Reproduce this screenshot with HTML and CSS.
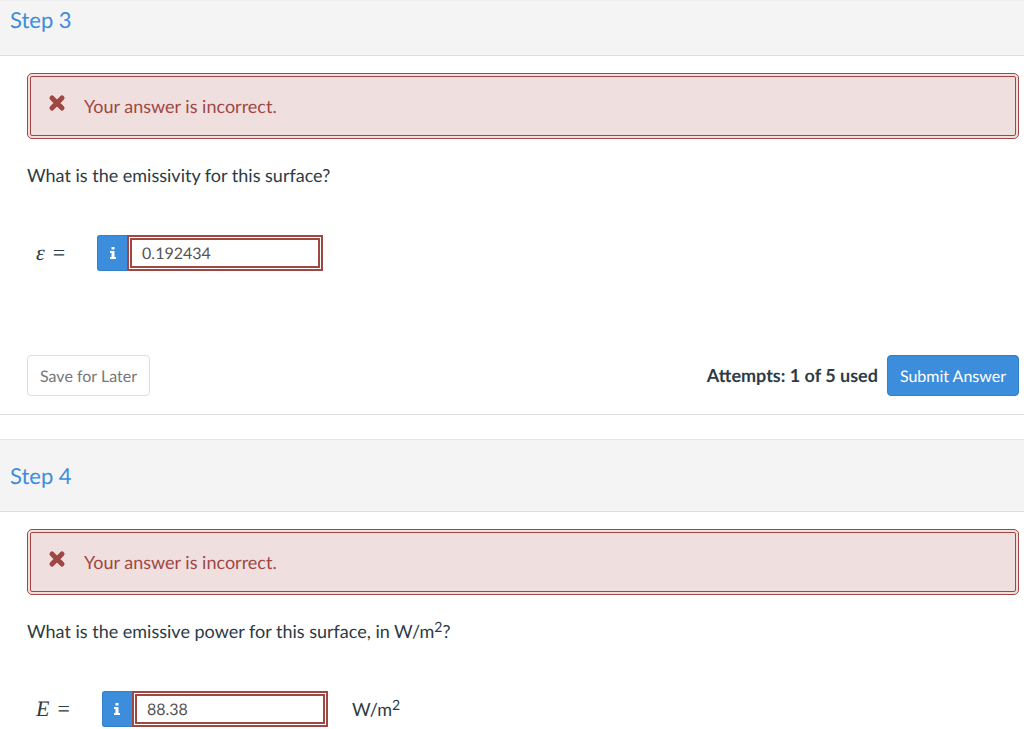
FILE: index.html
```html
<!DOCTYPE html>
<html lang="en">
<head>
	<meta charset="utf-8">
	<meta name="viewport" content="width=device-width, initial-scale=1">
	<title>Emissivity - Steps 3 and 4</title>
	<link rel="stylesheet" href="styles.css">
</head>

<body>
	<section class="step">
		<header class="step-header step-header-first">
			<h2><a href="#step3" id="step3">Step 3</a></h2>
		</header>

		<form class="step-body">
			<div class="alert" role="alert">
				<svg class="alert-icon" viewBox="0 0 18 18" aria-hidden="true"><path d="M4 4 L14 14 M14 4 L4 14"/></svg>
				<p>Your answer is incorrect.</p>
			</div>

			<p class="question">What is the emissivity for this surface?</p>

			<div class="answer">
				<label class="math" for="emissivity"><i>ε</i><span>=</span></label>
				<div class="input-group">
					<button type="button" class="info" aria-label="Information">
						<svg viewBox="0 0 6 12" aria-hidden="true"><path d="M1.500 0h3v2.500h-3z M0 4h4.500v6H6v2H0v-2h1.500V6H0z"/></svg>
					</button>
					<input type="text" id="emissivity" value="0.192434">
				</div>
			</div>

			<div class="actions">
				<button type="button" class="btn">Save for Later</button>
				<div class="submit">
					<strong>Attempts: 1 of 5 used</strong>
					<button type="button" class="btn btn-primary">Submit Answer</button>
				</div>
			</div>
		</form>
	</section>

	<section class="step">
		<header class="step-header">
			<h2><a href="#step4" id="step4">Step 4</a></h2>
		</header>

		<form class="step-body">
			<div class="alert" role="alert">
				<svg class="alert-icon" viewBox="0 0 18 18" aria-hidden="true"><path d="M4 4 L14 14 M14 4 L4 14"/></svg>
				<p>Your answer is incorrect.</p>
			</div>

			<p class="question">What is the emissive power for this surface, in W/m<sup>2</sup>?</p>

			<div class="answer">
				<label class="math" for="power"><i>E</i><span>=</span></label>
				<div class="input-group">
					<button type="button" class="info" aria-label="Information">
						<svg viewBox="0 0 6 12" aria-hidden="true"><path d="M1.500 0h3v2.500h-3z M0 4h4.500v6H6v2H0v-2h1.500V6H0z"/></svg>
					</button>
					<input type="text" id="power" value="88.38">
				</div>
				<span class="unit">W/m<sup>2</sup></span>
			</div>
		</form>
	</section>
</body>
</html>
```

FILE: styles.css
```css
* {
	box-sizing:border-box;
}

body {
	margin:0;
	background:#fff;
	color:#2d3b45;
	font-family:Lato, "Liberation Sans", sans-serif;
	font-size:18px;
	line-height:24px;
	text-rendering:geometricPrecision;
}

h2, p {
	margin:0;
	font-weight:normal;
}

button, input {
	font-family:inherit;
	font-size:16px;
	text-rendering:inherit;
}

sup {
	font-size:14px;
	line-height:0;
	vertical-align:6px;
}

.step {
	margin-bottom:24px;
	border-bottom:1px solid #ddd;
}

.step:last-child {
	margin-bottom:0;
	border-bottom:0;
}

.step-header {
	padding:21px 10px 20px;
	background:#f4f4f4;
	border-top:1px solid #e5e5e5;
	border-bottom:1px solid #ddd;
}

.step-header-first {
	padding-top:4px;
	border-top-color:#eee;
}

.step-header h2 {
	font-size:22px;
	line-height:30px;
}

.step-header a {
	color:#3d8ddd;
	text-decoration:none;
}

.step-body {
	padding:17px 5px 18px 27px;
}

.step:last-child .step-body {
	padding-bottom:0;
}

.alert {
	display:flex;
	align-items:center;
	gap:18px;
	height:66px;
	padding:0 17px;
	background:#efdfdf;
	border:4px double #9f4743;
	border-radius:5px;
	color:#9f4743;
}

.alert-icon {
	width:18px;
	height:18px;
	margin-bottom:6px;
	fill:none;
	stroke:#9f4743;
	stroke-width:5;
	stroke-linecap:round;
}

.question {
	margin-top:24px;
}

.answer {
	display:flex;
	align-items:center;
	margin-top:48px;
	padding-left:9px;
}

.math {
	display:flex;
	gap:8px;
	margin-right:32px;
	font-family:"Liberation Serif", serif;
	font-size:22px;
}

.input-group {
	display:flex;
	width:226px;
	height:36px;
}

.info {
	display:flex;
	align-items:center;
	justify-content:center;
	width:30px;
	padding:0;
	background:#3d8ddd;
	border:1px solid #337fcb;
	border-right:0;
	border-radius:3px 0 0 3px;
}

.info svg {
	width:6px;
	height:12px;
	fill:#fff;
}

.input-group input {
	flex:1;
	min-width:0;
	padding:0 10px;
	background:#fff;
	border:5px double #9f4743;
	border-radius:0;
	color:#555;
}

.unit {
	margin-left:24px;
}

.actions {
	display:flex;
	align-items:center;
	justify-content:space-between;
	margin-top:84px;
}

.submit {
	display:flex;
	align-items:center;
	gap:9px;
}

.submit strong {
	margin-bottom:2px;
}

.btn {
	height:41px;
	padding:2px 12px 0;
	background:#fff;
	border:1px solid #ddd;
	border-radius:4px;
	color:#777;
}

.btn-primary {
	background:#3d8ddd;
	border-color:#337fcb;
	color:#fff;
}
```
